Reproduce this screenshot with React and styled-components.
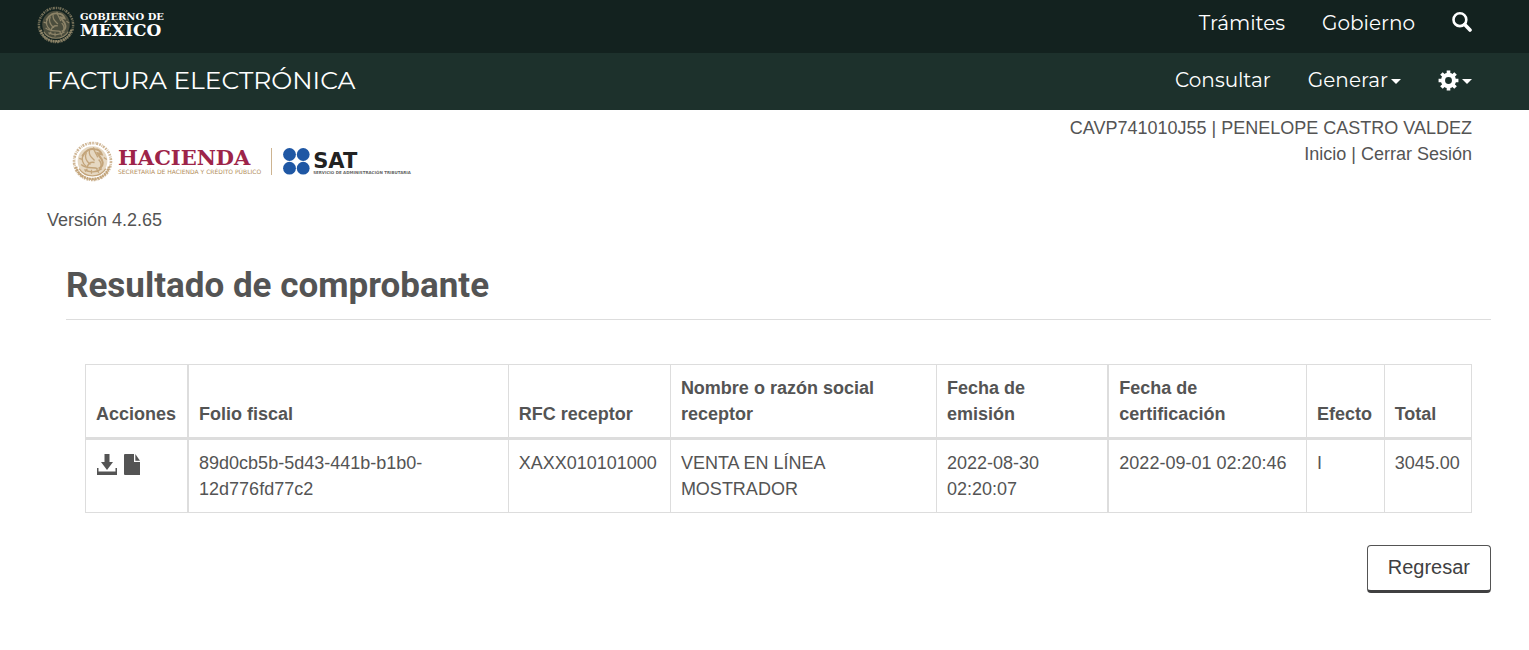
import React from 'react';
import styled, { createGlobalStyle } from 'styled-components';

const GlobalStyle = createGlobalStyle`
* {
  box-sizing: border-box;
}
body {
  margin: 0;
  background: #fff;
  color: #545454;
  font-family: "Liberation Sans", Arial, sans-serif;
  font-size: 18px;
  line-height: 26px;
}
a {
  color: inherit;
  text-decoration: none;
}
`

const TopBar = styled.header`
display: flex;
align-items: center;
justify-content: space-between;
height: 53px;
padding: 0 57px 4px 37px;
background: #13221f;
color: #fff;
`
const SubBar = styled.nav`
display: flex;
align-items: center;
justify-content: space-between;
height: 57px;
padding: 0 57px 0 47px;
background: #1d312c;
color: #fff;
`
const GobLogo = styled.a`
display: flex;
align-items: center;
gap: 5px;
`
const GobName = styled.span`
display: flex;
flex-direction: column;
font-family: "DejaVu Serif", serif;
font-weight: 700;
font-size: 17px;
line-height: 15px;
`
const GobSmall = styled.span`
font-size: 10px;
line-height: 12px;
`
const Menu = styled.ul`
display: flex;
align-items: center;
gap: 37px;
margin: 0;
padding: 0 0 3px;
list-style: none;
`
const MenuLink = styled.a`
display: flex;
align-items: center;
gap: 3px;
font-family: Montserrat, Inter, sans-serif;
font-size: 20px;
line-height: 28px;
`
const MenuButton = styled.button`
display: flex;
align-items: center;
gap: 3px;
padding: 0;
border: none;
background: none;
color: inherit;
font-family: Montserrat, Inter, sans-serif;
font-size: 20px;
line-height: 28px;
cursor: pointer;
`
const Caret = styled.span`
border-top: 5px solid;
border-left: 5px solid transparent;
border-right: 5px solid transparent;
margin-top: 3px;
`
const AppTitle = styled.a`
padding-bottom: 3px;
font-family: Montserrat, Inter, sans-serif;
font-size: 25px;
line-height: 32px;
`

const Identity = styled.section`
display: flex;
justify-content: space-between;
align-items: flex-start;
padding: 5px 57px 0 72px;
`
const Logos = styled.div`
display: flex;
align-items: center;
padding-top: 26px;
`
const Hacienda = styled.div`
display: flex;
align-items: center;
gap: 5px;
`
const HaciendaName = styled.div`
display: flex;
flex-direction: column;
color: #9d2449;
font-family: "DejaVu Serif", serif;
font-size: 21px;
font-weight: 700;
line-height: 20px;
`
const HaciendaSub = styled.span`
color: #b38e5d;
font-family: "DejaVu Sans", sans-serif;
font-size: 6px;
font-weight: 400;
line-height: 8px;
`
const Divider = styled.span`
width: 1px;
height: 27px;
margin: 0 11px 0 10px;
background: #cdb491;
`
const Sat = styled.div`
display: flex;
align-items: center;
gap: 3px;
`
const SatName = styled.div`
display: flex;
flex-direction: column;
padding-top: 4px;
color: #222;
font-family: "DejaVu Sans", sans-serif;
font-size: 21px;
font-weight: 700;
line-height: 18px;
`
const SatSub = styled.span`
color: #666;
font-size: 4px;
line-height: 6px;
`
const UserInfo = styled.div`
text-align: right;
`
const Version = styled.div`
padding: 25px 47px 0;
`

const Main = styled.main`
padding: 32px 38px 0 66px;
`
const Title = styled.h1`
margin: 0;
padding-bottom: 12px;
border-bottom: 1px solid #ddd;
font-family: Roboto, sans-serif;
font-size: 35px;
font-weight: 700;
line-height: 42px;
`
const TableWrap = styled.div`
padding: 44px 19px 32px;
`
const Table = styled.table`
width: 100%;
border-collapse: collapse;
table-layout: fixed;
`
const Th = styled.th`
width: ${(props) => props.$width};
padding: 10px;
border: 1px solid #ddd;
border-bottom: 3px solid #ddd;
border-left-width: ${(props) => (props.$wide ? '2px' : '1px')};
text-align: left;
vertical-align: bottom;
`
const Td = styled.td`
padding: 10px;
border: 1px solid #ddd;
border-left-width: ${(props) => (props.$wide ? '2px' : '1px')};
vertical-align: top;
`
const Actions = styled.div`
display: flex;
gap: 7px;
padding: 4px 0 0 1px;
`
const IconButton = styled.button`
display: flex;
padding: 0;
border: none;
background: none;
color: inherit;
cursor: pointer;
`
const Footer = styled.div`
display: flex;
justify-content: flex-end;
`
const BackButton = styled.button`
padding: 8px 20px 9px;
border: 1px solid #545454;
border-bottom: 3px solid #404041;
border-radius: 4px;
background: #fff;
color: #404041;
font-family: "Liberation Sans", Arial, sans-serif;
font-size: 20px;
line-height: 27px;
cursor: pointer;
`

const columns = [
    { title: 'Acciones', width: '7.4%' },
    { title: 'Folio fiscal', width: '23.1%', wide: true },
    { title: 'RFC receptor', width: '11.7%' },
    { title: 'Nombre o razón social receptor', width: '19.2%' },
    { title: 'Fecha de emisión', width: '12.4%' },
    { title: 'Fecha de certificación', width: '14.3%', wide: true },
    { title: 'Efecto', width: '5.6%' },
    { title: 'Total', width: '6.3%' },
]

const rows = [
    {
        folio: '89d0cb5b-5d43-441b-b1b0-12d776fd77c2',
        rfc: 'XAXX010101000',
        nombre: 'VENTA EN LÍNEA MOSTRADOR',
        emision: '2022-08-30 02:20:07',
        certificacion: '2022-09-01 02:20:46',
        efecto: 'I',
        total: '3045.00',
    },
]

const Seal = ({ size, color, soft }) => (
    <svg width={size} height={size} viewBox="0 0 40 40" fill="none" stroke={color} aria-hidden="true">
        <circle cx="20" cy="20" r="18" strokeWidth="2.6" strokeDasharray="1.6 .9 .8 .7 2 1" opacity=".8" />
        <path d="M4 25c1 6 7 12 16 12s15-6 16-12" strokeWidth="2.4" strokeDasharray="2 .6" />
        <circle cx="20" cy="19.500" r="14.500" fill={soft} stroke="none" />
        <path d="M10 15c3-6 8-8 12-7 4 0 6 2 7 5l-4-1c1 3 5 5 5 9 0 3-2 5-4 6" strokeWidth="2" />
        <path d="M11 13c-2 5-1 9 3 12m0-14c-2 5 0 9 4 12m-1-14c-1 5 2 7 5 10m-1-13c0 4 3 6 4 10" strokeWidth="1.3" />
        <path d="M9 23c5 5 12 2 16 4m-13 1c5 3 12 3 17-1m-7-6c-4-1-6 1-7 4m11-7c2 2 3 5 2 8" strokeWidth="1.4" />
        <path d="M7 27c3 5 8 7 13 7s10-2 13-7M13 30l2-3m4 5v-4m7 3-2-4M31 16l3 2M7 17l3 1" strokeWidth="1.2" />
    </svg>
)

const SearchIcon = () => (
    <svg width="20" height="22" viewBox="0 0 20 22" fill="none" stroke="currentColor" aria-hidden="true">
        <circle cx="7.900" cy="7.700" r="6.400" strokeWidth="2.600" />
        <path d="M12.700 12.600l5.300 5.400" strokeWidth="3.600" strokeLinecap="round" />
    </svg>
)

const CogIcon = () => (
    <svg width="21" height="21" viewBox="0 0 22 22" fill="none" stroke="currentColor" aria-hidden="true">
        <circle cx="11" cy="11" r="5.800" strokeWidth="4.400" />
        <path
            d="M11 .6v4M11 17.400v4M.6 11h4M17.400 11h4M3.600 3.600l3 3M15.400 15.400l3 3M3.600 18.400l3-3M15.400 6.600l3-3"
            strokeWidth="3.800"
        />
    </svg>
)

const DownloadIcon = () => (
    <svg width="20" height="22" viewBox="0 0 20 22" fill="currentColor" aria-hidden="true">
        <path d="M7.500 0h5v8H16l-6 8L4 8h3.500z" />
        <path d="M0 14h1.500v3.500h17V14H20v7H0z" />
    </svg>
)

const FileIcon = () => (
    <svg width="17" height="22" viewBox="0 0 17 22" fill="currentColor" aria-hidden="true">
        <path d="M1 0h9v8h6v13H1a1 1 0 0 1-1-1V1a1 1 0 0 1 1-1z" />
        <path d="M11.300 0L16 6.700h-4.700z" />
    </svg>
)

const SatDots = () => (
    <svg width="27" height="27" viewBox="0 0 27 27" fill="#1f57a4" aria-hidden="true">
        <circle cx="6.500" cy="6.500" r="6.400" />
        <circle cx="20.200" cy="6.500" r="6.400" />
        <circle cx="6.500" cy="20.200" r="6.400" />
        <circle cx="20.200" cy="20.200" r="6.400" />
    </svg>
)

const App = () => {
    return (
        <>
            <GlobalStyle />
            <TopBar>
                <GobLogo href="#">
                    <Seal size={38} color="#8d8468" soft="#4b4d3d" />
                    <GobName>
                        <GobSmall>GOBIERNO DE</GobSmall>
                        MÉXICO
                    </GobName>
                </GobLogo>
                <Menu>
                    <li><MenuLink href="#">Trámites</MenuLink></li>
                    <li><MenuLink href="#">Gobierno</MenuLink></li>
                    <li><MenuButton type="button" aria-label="Buscar"><SearchIcon /></MenuButton></li>
                </Menu>
            </TopBar>
            <SubBar>
                <AppTitle href="#">FACTURA ELECTRÓNICA</AppTitle>
                <Menu>
                    <li><MenuLink href="#">Consultar</MenuLink></li>
                    <li><MenuButton type="button">Generar<Caret /></MenuButton></li>
                    <li><MenuButton type="button" aria-label="Configuración"><CogIcon /><Caret /></MenuButton></li>
                </Menu>
            </SubBar>

            <Identity>
                <Logos>
                    <Hacienda>
                        <Seal size={41} color="#c3a47a" soft="#e6d8c2" />
                        <HaciendaName>
                            HACIENDA
                            <HaciendaSub>SECRETARÍA DE HACIENDA Y CRÉDITO PÚBLICO</HaciendaSub>
                        </HaciendaName>
                    </Hacienda>
                    <Divider />
                    <Sat>
                        <SatDots />
                        <SatName>
                            SAT
                            <SatSub>SERVICIO DE ADMINISTRACIÓN TRIBUTARIA</SatSub>
                        </SatName>
                    </Sat>
                </Logos>
                <UserInfo>
                    <div>CAVP741010J55 | PENELOPE CASTRO VALDEZ</div>
                    <div><a href="#">Inicio</a> | <a href="#">Cerrar Sesión</a></div>
                </UserInfo>
            </Identity>
            <Version>Versión 4.2.65</Version>

            <Main>
                <Title>Resultado de comprobante</Title>
                <TableWrap>
                    <Table>
                        <thead>
                            <tr>
                                {columns.map((col) => (
                                    <Th key={col.title} $width={col.width} $wide={col.wide}>{col.title}</Th>
                                ))}
                            </tr>
                        </thead>
                        <tbody>
                            {rows.map((row) => (
                                <tr key={row.folio}>
                                    <Td>
                                        <Actions>
                                            <IconButton type="button" aria-label="Descargar"><DownloadIcon /></IconButton>
                                            <IconButton type="button" aria-label="Ver archivo"><FileIcon /></IconButton>
                                        </Actions>
                                    </Td>
                                    <Td $wide>{row.folio}</Td>
                                    <Td>{row.rfc}</Td>
                                    <Td>{row.nombre}</Td>
                                    <Td>{row.emision}</Td>
                                    <Td $wide>{row.certificacion}</Td>
                                    <Td>{row.efecto}</Td>
                                    <Td>{row.total}</Td>
                                </tr>
                            ))}
                        </tbody>
                    </Table>
                </TableWrap>
                <Footer>
                    <BackButton type="button">Regresar</BackButton>
                </Footer>
            </Main>
        </>
    )
}
export default App;
